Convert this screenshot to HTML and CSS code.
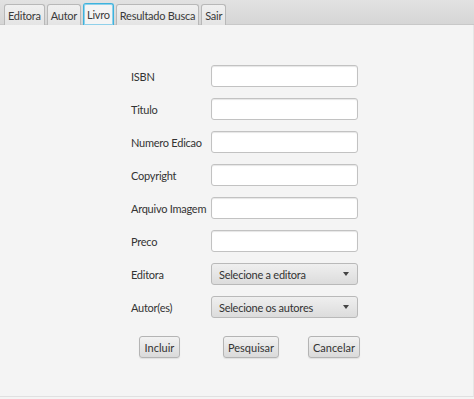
FILE: index.html
```html
<!DOCTYPE html>
<html>
<head>
<meta charset="utf-8">
<link rel="stylesheet" href="styles.css">
</head>
<body>
<div class="window">
  <div class="tabbar">
    <div class="tab">Editora</div>
    <div class="tab">Autor</div>
    <div class="tab selected">Livro</div>
    <div class="tab">Resultado Busca</div>
    <div class="tab">Sair</div>
  </div>
  <div class="content">
    <div class="form">
      <label>ISBN</label><div class="field"></div>
      <label>Titulo</label><div class="field"></div>
      <label>Numero Edicao</label><div class="field"></div>
      <label>Copyright</label><div class="field"></div>
      <label>Arquivo Imagem</label><div class="field"></div>
      <label>Preco</label><div class="field"></div>
      <label>Editora</label><div class="combo"><span>Selecione a editora</span><i class="arrow"></i></div>
      <label>Autor(es)</label><div class="combo"><span>Selecione os autores</span><i class="arrow"></i></div>
    </div>
    <div class="buttons">
      <button class="btn b1">Incluir</button>
      <button class="btn b2">Pesquisar</button>
      <button class="btn b3">Cancelar</button>
    </div>
  </div>
</div>
</body>
</html>
```
FILE: styles.css
```css
* { box-sizing: border-box; }
html, body { margin: 0; padding: 0; }
body {
  width: 474px; height: 399px; overflow: hidden;
  font-family: Lato, "Noto Sans", sans-serif;
  font-size: 11px; letter-spacing: -0.25px; color: #333;
  background: #f4f4f4;
  white-space: nowrap;
}
.window { display: flex; flex-direction: column; height: 399px; }
.tabbar {
  height: 25px; flex: none;
  display: flex; align-items: flex-end; gap: 2px;
  padding-left: 4px;
  background: linear-gradient(#e2e2e2, #d6d6d6);
  border-bottom: 1px solid #c8c8c8;
}
.tab {
  height: 21px; padding: 0 3px;
  display: flex; align-items: center;
  border: 1px solid #b8b8b8; border-bottom: none;
  border-radius: 3px 3px 0 0;
  background: linear-gradient(#f0f0f0, #e4e4e4);
  color: #3a3a3a; margin-bottom: -1px;
}
.tab.selected {
  border: 1px solid #3db3dd; border-bottom: none;
  background: #f4f4f4; height: 22px;
  box-shadow: inset 0 0 0 1px #8fd0ea;
}
.content {
  flex: 1; background: #f4f4f4;
  padding-top: 40px;
  border-right: 1px solid #e6e6e6;
  border-bottom: 1px solid #e0e0e0;
  margin-bottom: 2px;
}
.form {
  display: grid;
  grid-template-columns: 80px 147px;
  grid-auto-rows: 22px;
  row-gap: 11px;
  margin-left: 131px;
  align-items: center;
}
.form label { color: #333; }
.field {
  height: 22px; background: #fff;
  border: 1px solid #c2c2c2; border-radius: 3px;
  box-shadow: inset 0 1px 1px #e6e6e6;
}
.combo {
  height: 22px; display: flex; align-items: center; justify-content: space-between;
  padding: 0 8px 0 7px;
  border: 1px solid #b9b9b9; border-radius: 3px;
  background: linear-gradient(#efefef, #dcdcdc);
  color: #333;
}
.arrow {
  width: 0; height: 0;
  border-left: 3.5px solid transparent; border-right: 3.5px solid transparent;
  border-top: 4px solid #444;
}
.buttons { display: flex; margin-top: 18px; padding-left: 139px; }
.btn {
  font: inherit; color: #333;
  height: 22px; padding: 0;
  border: 1px solid #b4b4b4; border-radius: 3px;
  background: linear-gradient(#f2f2f2, #dadada);
  box-shadow: 0 1px 1px #e0e0e0;
}
.b1 { width: 41px; }
.b2 { width: 56px; margin-left: 43px; }
.b3 { width: 52px; margin-left: 29px; }
```
